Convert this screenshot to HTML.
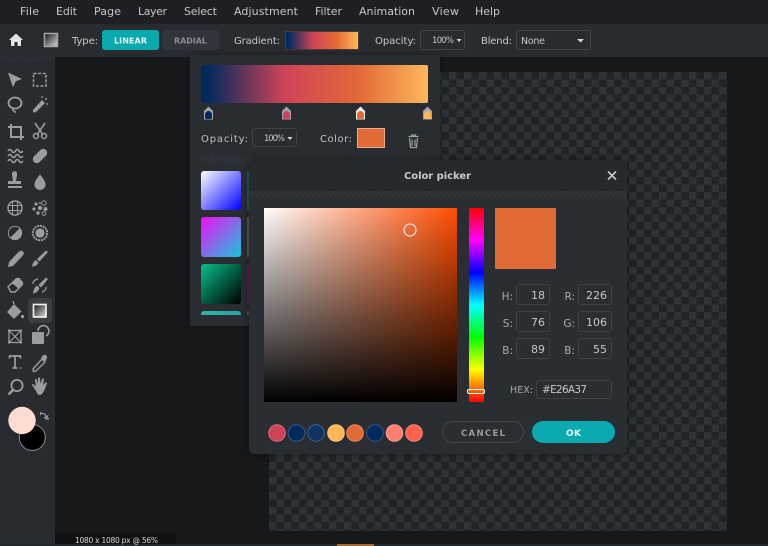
<!DOCTYPE html>
<html><head><meta charset="utf-8"><style>
html,body{margin:0;padding:0;background:#17181a}
body{width:768px;height:546px;position:relative;overflow:hidden;font-family:"DejaVu Sans",sans-serif}
.b{position:absolute;box-sizing:border-box}
svg text{font-family:"DejaVu Sans",sans-serif;fill:#c6c7c9;font-size:11px}
</style></head><body>
<div class="b" style="left:0;top:0;width:768px;height:24px;background:#1d1f23"></div>
<div class="b" style="left:0;top:24px;width:768px;height:33px;background:#282b30"></div>
<div class="b" style="left:0;top:57px;width:55px;height:489px;background:#282c31"></div>
<div class="b" style="left:0;top:57px;width:55px;height:4px;background:repeating-linear-gradient(135deg,#2e3137 0 2px,#282c31 2px 4px)"></div>
<div class="b" style="left:269px;top:72px;width:458px;height:459px;background:repeating-conic-gradient(#202327 0 25%,#2f3237 0 50%) 0 0/15px 15px"></div>
<div class="b" style="left:55px;top:534px;width:121px;height:10px;background:#101113"></div>
<div class="b" style="left:0;top:544px;width:768px;height:2px;background:#1f2a2e"></div>
<div class="b" style="left:337px;top:544px;width:37px;height:2px;background:#a8682f"></div>
<!-- toolbar controls -->
<div class="b" style="left:102px;top:30px;width:57px;height:20px;border-radius:3px;background:#0aa9ad"></div>
<div class="b" style="left:162px;top:30px;width:57px;height:20px;border-radius:3px;background:#31343a"></div>
<div class="b" style="left:285px;top:31px;width:74px;height:19px;background:linear-gradient(90deg,#002a5c 3%,#cf4358 37%,#e26a37 70%,#ffb75a 100%);border:1px solid #4a3a30"></div>
<div class="b" style="left:420px;top:30px;width:45px;height:20px;border:1px solid #3e4146;border-radius:3px"></div>
<div class="b" style="left:516px;top:30px;width:75px;height:20px;border:1px solid #3e4146;border-radius:3px"></div>
<!-- gradient panel -->
<div class="b" style="left:190px;top:55px;width:250px;height:271px;background:#292c31;box-shadow:0 0 6px rgba(0,0,0,.35)"></div>
<div class="b" style="left:201px;top:65px;width:227px;height:38px;border-radius:2px;background:linear-gradient(90deg,#002a5c 3%,#cf4358 37%,#e26a37 70%,#ffb75a 100%)"></div>
<div class="b" style="left:252px;top:128px;width:45px;height:19px;border:1px solid #3e4146;border-radius:3px"></div>
<div class="b" style="left:357px;top:128px;width:28px;height:20px;background:#e26a37;border:1px solid #eda98b"></div>
<div class="b" style="left:201px;top:157px;width:229px;height:6px;background:repeating-linear-gradient(135deg,#303339 0 2px,#292c31 2px 4px)"></div>
<div class="b" style="left:201px;top:171px;width:40px;height:39px;border-radius:3px;background:linear-gradient(135deg,#fff,#0000ff 100%)"></div>
<div class="b" style="left:201px;top:217px;width:40px;height:40px;border-radius:3px;background:linear-gradient(135deg,#f10ff5,#16c6dc 100%)"></div>
<div class="b" style="left:201px;top:264px;width:40px;height:40px;border-radius:3px;background:linear-gradient(135deg,#04c08a,#000 100%)"></div>
<div class="b" style="left:201px;top:311px;width:40px;height:4px;border-radius:3px 3px 0 0;background:linear-gradient(90deg,#2fb8a0,#2aa0a8)"></div>
<div class="b" style="left:247px;top:171px;width:2px;height:39px;background:#1f5a5a"></div>
<div class="b" style="left:247px;top:217px;width:2px;height:40px;background:#55584f"></div>
<div class="b" style="left:247px;top:264px;width:2px;height:40px;background:#5a1a50"></div>
<div class="b" style="left:247px;top:311px;width:2px;height:4px;background:#6a4a4a"></div>
<!-- dialog -->
<div class="b" style="left:249px;top:160px;width:378px;height:294px;border-radius:5px;background:#2a2d31;box-shadow:0 0 8px rgba(0,0,0,.4);overflow:hidden">
  <div class="b" style="left:0;top:0;width:378px;height:31px;background:#26292d"></div>
  <div class="b" style="left:0;top:31px;width:378px;height:6px;background:repeating-linear-gradient(135deg,#32353a 0 2px,#2a2d31 2px 4px)"></div>
</div>
<div class="b" style="left:264px;top:208px;width:193px;height:194px;background:linear-gradient(to top,#000,rgba(0,0,0,0)),linear-gradient(to right,#fff,#ff4d00)"></div>
<div class="b" style="left:469px;top:208px;width:15px;height:194px;background:linear-gradient(to bottom,#f00 0%,#f0f 16.66%,#00f 33.33%,#0ff 50%,#0f0 66.66%,#ff0 83.33%,#f00 100%)"></div>
<div class="b" style="left:467px;top:389px;width:18px;height:5px;border:1px solid #fff;border-radius:2px;background:rgba(255,120,0,.4)"></div>
<div class="b" style="left:495px;top:208px;width:61px;height:61px;background:#e26a37;border-radius:1px"></div>
<div class="b" style="left:516px;top:284px;width:34px;height:21px;border:1px solid #3e4146;border-radius:3px"></div>
<div class="b" style="left:516px;top:311px;width:34px;height:21px;border:1px solid #3e4146;border-radius:3px"></div>
<div class="b" style="left:516px;top:338px;width:34px;height:21px;border:1px solid #3e4146;border-radius:3px"></div>
<div class="b" style="left:578px;top:284px;width:34px;height:21px;border:1px solid #3e4146;border-radius:3px"></div>
<div class="b" style="left:578px;top:311px;width:34px;height:21px;border:1px solid #3e4146;border-radius:3px"></div>
<div class="b" style="left:578px;top:338px;width:34px;height:21px;border:1px solid #3e4146;border-radius:3px"></div>
<div class="b" style="left:536px;top:380px;width:76px;height:19px;border:1px solid #3e4146;border-radius:3px"></div>
<div class="b" style="left:442px;top:421px;width:82px;height:22px;border:1px solid #45484d;border-radius:11px"></div>
<div class="b" style="left:532px;top:421px;width:83px;height:22px;background:#0aaab0;border-radius:11px"></div>
<!-- selected tool -->
<div class="b" style="left:28px;top:298px;width:24px;height:25px;background:#3a3d42;border-radius:4px"></div>
<svg class="b" style="left:0;top:0;filter:blur(.3px)" width="768" height="546" viewBox="0 0 768 546" xmlns="http://www.w3.org/2000/svg">
<defs>
<linearGradient id="g1" x1="0" y1="0" x2="1" y2="1"><stop offset="0" stop-color="#111"/><stop offset="1" stop-color="#ddd"/></linearGradient>
</defs>
<!-- menu text -->
<g>
<text x="20" y="15" textLength="19">File</text>
<text x="56" y="15" textLength="21">Edit</text>
<text x="94" y="15" textLength="27">Page</text>
<text x="138" y="15" textLength="29">Layer</text>
<text x="184" y="15" textLength="33">Select</text>
<text x="234" y="15" textLength="64">Adjustment</text>
<text x="315" y="15" textLength="27">Filter</text>
<text x="359" y="15" textLength="56">Animation</text>
<text x="432" y="15" textLength="27">View</text>
<text x="475" y="15" textLength="25">Help</text>
</g>
<!-- toolbar -->
<path d="M16 33.5 L9 40 L11 40 L11 46 L14.5 46 L14.5 42 L17.5 42 L17.5 46 L21 46 L21 40 L23 40 Z" fill="#e4e4e5"/>
<rect x="44.5" y="33.5" width="13" height="13" fill="url(#g1)" stroke="#a5a6a8" stroke-width="1.5"/>
<text x="72" y="44" textLength="26" style="font-size:10px">Type:</text>
<text x="114" y="43.500" textLength="33" style="font-size:8px;font-weight:bold;fill:#e6f6f6">LINEAR</text>
<text x="174" y="43.500" textLength="33" style="font-size:8px;font-weight:bold;fill:#8d8e92">RADIAL</text>
<text x="234" y="44" textLength="46" style="font-size:10px">Gradient:</text>
<text x="375" y="44" textLength="41" style="font-size:10px">Opacity:</text>
<text x="432" y="43" textLength="22" style="font-size:8.5px">100%</text>
<path d="M456.5 39 h5 l-2.5 3z" fill="#d5d5d5"/>
<text x="481" y="44" textLength="31" style="font-size:10px">Blend:</text>
<text x="521" y="44" textLength="24" style="font-size:9.5px">None</text>
<path d="M577 39 h7 l-3.5 3.5z" fill="#d5d5d5"/>
<!-- stops -->
<g>
<path d="M204 111 L208.500 106.500 L213 111 V119.500 H204Z" fill="#a5a6a8"/><path d="M205 114.500 a3.500 3.500 0 0 1 7 0 v3 q0 1.500 -1.500 1.500 h-4 q-1.500 0 -1.500 -1.500z" fill="#002a5c"/>
<path d="M282 111 L286.500 106.500 L291 111 V119.500 H282Z" fill="#a5a6a8"/><path d="M283 114.500 a3.500 3.500 0 0 1 7 0 v3 q0 1.500 -1.500 1.500 h-4 q-1.500 0 -1.500 -1.500z" fill="#cf4358"/>
<path d="M356 111 L360.500 106.500 L365 111 V119.500 H356Z" fill="#f0f0f0"/><path d="M357 114.500 a3.500 3.500 0 0 1 7 0 v3 q0 1.500 -1.500 1.500 h-4 q-1.500 0 -1.500 -1.500z" fill="#e26a37"/>
<path d="M423 111 L427.500 106.500 L432 111 V119.500 H423Z" fill="#a5a6a8"/><path d="M424 114.500 a3.500 3.500 0 0 1 7 0 v3 q0 1.500 -1.500 1.500 h-4 q-1.500 0 -1.500 -1.500z" fill="#ffb75a"/>
</g>
<text x="201" y="142" textLength="47" style="font-size:10px;fill:#bfc0c2">Opacity:</text>
<text x="264" y="141" textLength="21" style="font-size:8.5px">100%</text>
<path d="M287.500 137 h5 l-2.500 3z" fill="#d5d5d5"/>
<text x="320" y="142" textLength="32" style="font-size:10px;fill:#bfc0c2">Color:</text>
<path d="M408.500 136.500 h10 M411.500 136.500 v-1.500 h4 v1.500 M409.500 138 l1 9.500 h6 l1 -9.500 M412 139.500 v6.500 M415 139.500 v6.500" fill="none" stroke="#a0a1a3" stroke-width="1.200"/>
<!-- dialog text -->
<text x="404" y="179" textLength="67" style="font-size:10px;font-weight:bold;fill:#c9ccd0">Color picker</text>
<path d="M608 171.500 l8 8 M616 171.500 l-8 8" stroke="#c8c9cb" stroke-width="1.600" fill="none"/>
<circle cx="410" cy="230" r="6" fill="none" stroke="#f4e6de" stroke-width="1.200"/>
<g text-anchor="end">
<text x="513" y="300" style="font-size:10.5px;fill:#a9aaac">H:</text><text x="513" y="327" style="font-size:10.5px;fill:#a9aaac">S:</text><text x="513" y="354" style="font-size:10.5px;fill:#a9aaac">B:</text>
<text x="575" y="300" style="font-size:10.5px;fill:#a9aaac">R:</text><text x="575" y="327" style="font-size:10.5px;fill:#a9aaac">G:</text><text x="575" y="354" style="font-size:10.5px;fill:#a9aaac">B:</text>
<text x="545" y="299">18</text><text x="545" y="326">76</text><text x="545" y="353">89</text>
<text x="607" y="299">226</text><text x="607" y="326">106</text><text x="607" y="353">55</text>
</g>
<text x="510" y="393" textLength="23" style="font-size:9.5px;fill:#a9aaac">HEX:</text>
<text x="542" y="393" textLength="45" style="font-size:10.5px">#E26A37</text>
<g stroke-width="1">
<circle cx="277" cy="433" r="8.300" fill="#cf4358" stroke="#dc6a7a"/>
<circle cx="296.500" cy="433" r="8.300" fill="#002a5c" stroke="#3a5a84"/>
<circle cx="316" cy="433" r="8.300" fill="#0f3464" stroke="#3f6290"/>
<circle cx="336" cy="433" r="8.300" fill="#ffb75a" stroke="#ffc77f"/>
<circle cx="355" cy="433" r="8.300" fill="#e26a37" stroke="#ea8a60"/>
<circle cx="375" cy="433" r="8.300" fill="#002a5c" stroke="#35557f"/>
<circle cx="394.500" cy="433" r="8.300" fill="#ff7f73" stroke="#ff9b91"/>
<circle cx="414" cy="433" r="8.300" fill="#ff6150" stroke="#ff8577"/>
</g>
<text x="461" y="436" textLength="44" style="font-size:8.500px;font-weight:bold;fill:#9a9b9e">CANCEL</text>
<text x="566" y="436" textLength="15" style="font-size:9px;font-weight:bold;fill:#eefafa">OK</text>
<text x="75" y="543" textLength="83" style="font-size:7.500px;fill:#d8d8d8">1080 x 1080 px @ 56%</text>
<!-- tool icons -->
<g fill="#9c9d9f" stroke="none">
<path d="M8 72.500 L22 79 L15.800 81.300 L13 87.500Z"/>
<rect x="33.500" y="73.500" width="12.500" height="12.500" fill="none" stroke="#9c9d9f" stroke-width="1.500" stroke-dasharray="3 1.600"/>
<ellipse cx="15" cy="103" rx="6.500" ry="5.500" fill="none" stroke="#9c9d9f" stroke-width="1.800"/>
<path d="M13 108 q-1 3 1 3 q2 0 1 2" fill="none" stroke="#9c9d9f" stroke-width="1.300"/>
<path d="M33 110 L42 100 L45 103 L36 112 Q34 113 33 112Z"/><circle cx="46" cy="99" r="1"/><circle cx="42" cy="97" r=".9"/><circle cx="47" cy="104" r=".9"/>
<path d="M11 124 v13 h13 M8 127 h13 v13" fill="none" stroke="#9c9d9f" stroke-width="2"/>
<path d="M35 123 L43 135 M45 123 L37 135" stroke="#9c9d9f" stroke-width="1.600" fill="none"/><circle cx="36" cy="136" r="2.500" fill="none" stroke="#9c9d9f" stroke-width="1.500"/><circle cx="44" cy="136" r="2.500" fill="none" stroke="#9c9d9f" stroke-width="1.500"/>
<g fill="none" stroke="#9c9d9f" stroke-width="1.600"><path d="M8 151 q2 -3 3.700 0 t3.700 0 t3.700 0 t3.700 0"/><path d="M8 156 q2 -3 3.700 0 t3.700 0 t3.700 0 t3.700 0"/><path d="M8 161 q2 -3 3.700 0 t3.700 0 t3.700 0 t3.700 0"/></g>
<rect x="31.500" y="152" width="17" height="8" rx="4" transform="rotate(-45 40 156)"/>
<path d="M12 175 a2.700 2.700 0 1 1 5 0 l-1 6 h5 v3 h-13 v-3 h5z M8 186 h14 v2 h-14z"/>
<path d="M40 174.500 Q34.500 181 34.500 184.500 a5.500 5.500 0 0 0 11 0 Q45.500 181 40 174.500Z"/>
<circle cx="15" cy="208" r="7" fill="none" stroke="#9c9d9f" stroke-width="1.400"/>
<path d="M8 205.500 h14 M8 210.500 h14 M12.500 201 v14 M17.500 201 v14" stroke="#9c9d9f" stroke-width="1" fill="none"/>
<circle cx="40" cy="208" r="2.200"/><circle cx="36" cy="204" r="1.600"/><circle cx="44" cy="203" r="2.200" fill="none" stroke="#9c9d9f"/><circle cx="34" cy="209" r="1.600"/><circle cx="45.500" cy="209" r="2"/><circle cx="38" cy="213" r="1.700"/><circle cx="44" cy="213.500" r="1.900" fill="none" stroke="#9c9d9f"/><circle cx="40" cy="203" r="1"/>
<circle cx="15" cy="233" r="7"/><path d="M10 238 A7 7 0 0 1 20 228 Z" fill="#282c31"/><circle cx="15" cy="233" r="6.700" fill="none" stroke="#9c9d9f" stroke-width=".9"/>
<circle cx="40" cy="233" r="7.200" fill="none" stroke="#9c9d9f" stroke-width="2" stroke-dasharray="2 .8"/><circle cx="40" cy="233" r="4.600"/>
<path d="M8 267 L9 262 L18 252.500 Q21 249.500 23 251.500 Q25 253.500 22 256.500 L13 266Z"/>
<path d="M32 266.500 Q36.500 267 38.500 262.500 L36 260 Q32.500 262 32 266.500Z M37 259 L46 250.500 L48 252 L39.500 261.500Z"/>
<path d="M8 287 L16 279 Q18 278 19.500 279 L22 282 Q23 283 22 285 L15 292 H11 Z" fill="none" stroke="#9c9d9f" stroke-width="1.400"/><path d="M13 284 L19 289 L22 285 Q23 283 22 282 L19.500 279 Q18 278 16 279 L11 284Z"/>
<path d="M33 293.500 Q38 293 39.500 288 L37 285.500 Q33.500 288 33 293.500Z M38.500 285 L46 277.500 L48 279 L41 287.500Z"/><path d="M33 284 Q33 280 38 279 M46 287 Q46 291 42 292" fill="none" stroke="#9c9d9f" stroke-width="1.200"/>
<path d="M14 304 L21.500 311.500 L15 318 Q14 319 13 318 L7.500 312.500 Q7 312 7.500 311.500 Z"/><path d="M14 304 L13 301" stroke="#9c9d9f" stroke-width="1.200"/><circle cx="22.500" cy="316.500" r="1.600"/>
<rect x="33.500" y="304.500" width="12.500" height="12.500" fill="url(#g1)" stroke="#eeeeee" stroke-width="1.700"/>
<rect x="9" y="330.500" width="12" height="12" fill="none" stroke="#9c9d9f" stroke-width="1.300"/><path d="M9 330.500 L21 342.500 M21 330.500 L9 342.500" stroke="#9c9d9f" stroke-width="1.200"/><path d="M8 329.500h2v2h-2z M20 329.500h2v2h-2z M8 341.500h2v2h-2z M20 341.500h2v2h-2z"/>
<rect x="32" y="332" width="12" height="12" rx="1"/><path d="M38 331 a5.500 5.500 0 1 1 8 5" fill="none" stroke="#9c9d9f" stroke-width="1.600"/>
<path d="M9.500 358.500 v-2.500 h11 v2.500 M15 356 v12 M12.500 368 h5" fill="none" stroke="#9c9d9f" stroke-width="1.700"/><circle cx="20.500" cy="368" r=".8"/>
<path d="M33 369 L42 359 L45 362 L36 371 L33.500 371.500Z" fill="none" stroke="#9c9d9f" stroke-width="1.400"/><path d="M41 358 Q43.500 354 46 355 Q48 357 46 360 L44.500 362Z"/>
<circle cx="17" cy="385.500" r="5.600" fill="none" stroke="#9c9d9f" stroke-width="1.800"/><path d="M13 390 L8.500 394.500" stroke="#9c9d9f" stroke-width="2.400"/>
<path d="M36 391 L32 385 Q32 383.500 34 384.500 L36 386.500 L35 380 Q35 378.500 36.500 379 L38 384 L38 378 Q39 376.500 40 378 L40.500 384 L42 379 Q43 377.500 44 379 L43 385 L45.500 382.500 Q47 382 47 383.500 L44 391 Q42 395 39.500 395 Q37.500 395 36 391Z"/>
<!-- arrows & colours -->
<path d="M40 414 q5 -2 6 3 l1.500 -1 l-1 3 l-2.500 -1.500" fill="none" stroke="#9c9d9f" stroke-width="1.200"/>
<path d="M40 411.500 l2 2 l-2 2z M48 420 l-1.500 -2 h3z"/>
</g>
<circle cx="32.300" cy="437.500" r="13" fill="#000" stroke="#8a8b8d" stroke-width="1"/>
<circle cx="22" cy="420.500" r="13.700" fill="#ffdcd3"/>
</svg>
</body></html>
